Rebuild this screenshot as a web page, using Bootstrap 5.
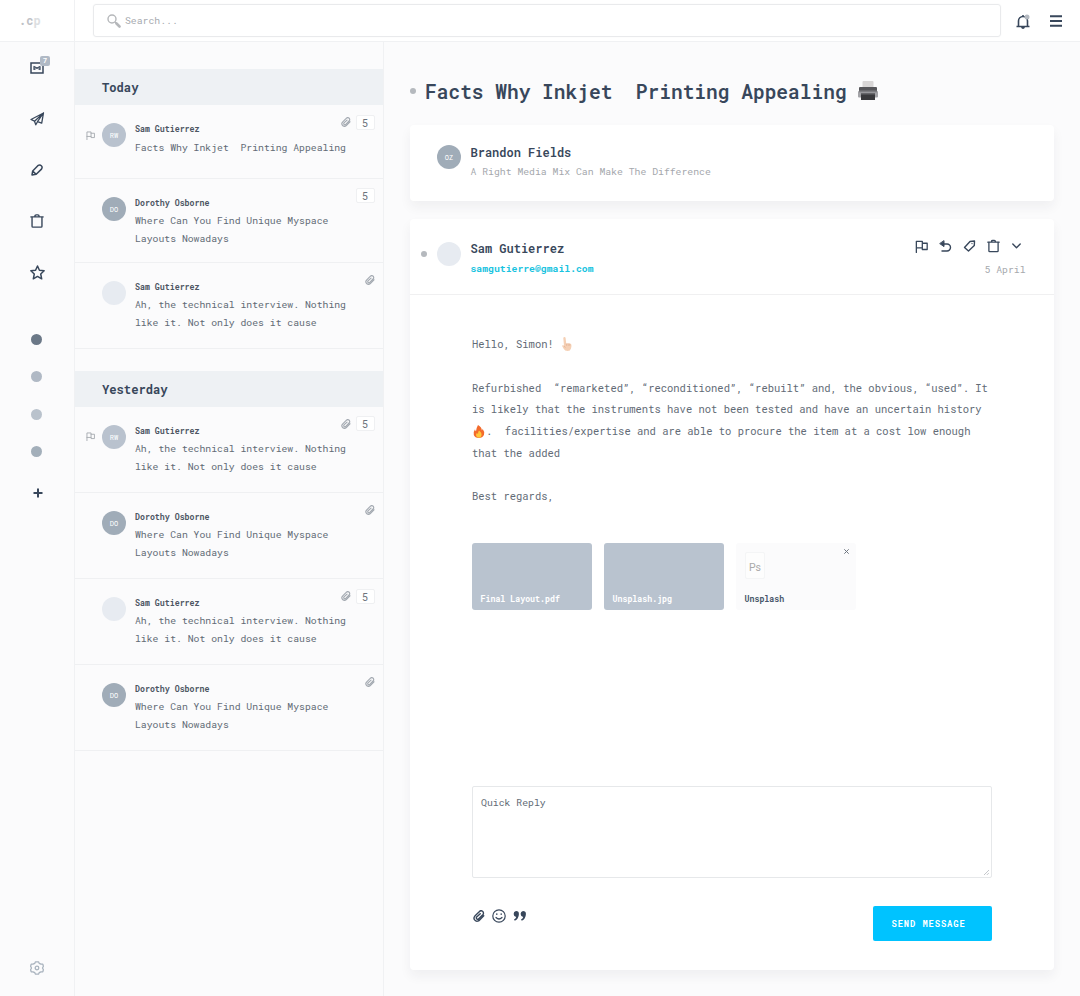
<!DOCTYPE html>
<html lang="en">
<head>
<meta charset="utf-8">
<meta name="viewport" content="width=device-width, initial-scale=1">
<title>Mail</title>
<link href="https://cdn.jsdelivr.net/npm/bootstrap@5.3.0/dist/css/bootstrap.min.css" rel="stylesheet">
<style>
:root{--ink:#38475b;--soft:#626b76;--line:#f0f1f3}
body{font-family:"Roboto Mono","DejaVu Sans Mono","Liberation Mono",monospace;font-size:9.77px;line-height:18px;color:var(--soft);background:#fbfbfc;height:996px;overflow:hidden}
svg{display:block;flex:none}
.ico{fill:none;stroke:currentColor;stroke-width:2.4;stroke-linejoin:round;stroke-linecap:round}
.topbar{height:42px;border-bottom:1px solid var(--line);background:#fff}
.logo{width:75px;border-right:1px solid var(--line);font-size:12px;font-weight:700;color:#bfc2c7;padding:0 0 2px 19px}
.logo span{color:#dcdee1}
.search{margin:4px 0 4px 18px;width:908px;border:1px solid #e9eaec;border-radius:3px;color:#a8abb0;padding-left:13px;box-shadow:0 0 2px rgba(0,0,0,.04)}
.search span{margin-left:4px}
.rail{width:75px;border-right:1px solid var(--line);color:var(--ink)}
.rail .slot{height:51px;padding-top:1px}
.tag7{position:absolute;left:10px;top:-6px;width:10px;height:10px;border-radius:2px;background:#b0b9c5;color:#fff;font-size:7px;font-weight:700;line-height:10px;text-align:center}
.dots{padding:36.500px 1px 0 0}
.dot{width:11px;height:11px;border-radius:50%;margin-bottom:26.5px}
.maillist{width:309px;border-right:1px solid var(--line);padding-top:27px}
.day{height:36px;background:#eef1f4;color:var(--ink);font-weight:700;font-size:12.15px;line-height:36px;padding-left:27px}
.item{height:86.2px;border-bottom:1px solid #eff0f2;padding:15px 8px 0 11px;position:relative}
.flagcol{width:16px;padding-top:10.500px;color:#a5a9af}
.av{width:24px;height:24px;border-radius:50%;color:#fff;font-size:7px;line-height:26px;text-align:center;flex:none;margin-top:3px}
.a1{background:#b9c2ce}.a2{background:#a0acb8}.a3{background:#e7ebf1}
.who{font-size:8.27px;font-weight:700;line-height:18px;color:#4d5663}
.txt{line-height:18px;white-space:pre}
.meta{position:absolute;right:8px;top:9px;color:#a3a9b1;height:16px}
.cnt{width:19px;height:15px;border:1px solid #eff0f2;border-radius:2px;background:#fff;color:#6d747d;text-align:center;line-height:14px;font-size:10.500px;padding-right:1px;margin-left:5px}
.content{padding:27px 26px 0}
.title{font-size:19.52px;line-height:46.500px;font-weight:600;color:var(--ink);white-space:pre;height:56px}
.bullet{width:6px;height:6px;border-radius:50%;background:#b5b9be;flex:none}
.panel{background:#fff;border-radius:4px;box-shadow:0 6px 12px rgba(30,40,60,.055)}
.nm{font-size:12px;font-weight:600;color:var(--ink);line-height:20px}
.letter{font-size:10.49px;line-height:21.75px;white-space:pre;padding:39px 0 0 62px;height:247.500px}
.letter svg{display:inline-block;vertical-align:-3px}
.file{width:120px;height:67px;border-radius:3px;background:#b9c3cf;color:#fff;font-size:8.28px;font-weight:700;padding:0 0 2px 8.5px;position:relative}
.file.plain{background:#fbfbfc;color:#47566a}
.ps{position:absolute;left:9px;top:9px;width:20px;height:27px;border:1px solid #f4f5f6;background:#fdfdfd;font-family:Roboto,sans-serif;font-weight:400;font-size:10.500px;line-height:30px;text-align:center;color:#aaa;border-radius:2px}
.reply{width:520px;height:92px;border:1px solid #e6e8ea;border-radius:2px;margin:177px 0 0 62px;padding:7px 8px;font-size:9.8px;position:relative}
.send{width:119px;height:35px;background:#00c3ff;color:#fff;font-weight:700;font-size:8.8px;letter-spacing:.9px;border-radius:2px;line-height:35px;padding:0 0 0 19px;border:0;text-align:left}
</style>
</head>
<body>
<svg width="0" height="0" class="position-absolute">
<symbol id="clip" viewBox="0 0 24 24"><path d="M21.500 11.500l-8.200 8.600a6 6 0 0 1-9.600-7.900L12.500 3.500a4.500 4.500 0 0 1 7.500 5.500l-8.500 8.500a2.500 2.500 0 0 1-4.300-3.500L14.500 7.500" stroke-width="2.800"/></symbol>
<symbol id="flag" viewBox="0 0 24 24"><path d="M2.500 23V2.500h11v12h-11M13.500 6h9v11.500h-9v-3"/></symbol>
<symbol id="trash" viewBox="0 0 24 24"><path d="M1.500 5h21M3.500 5v16q0 1.500 1.500 1.500h14q1.500 0 1.500-1.500V5M8.500 5V3.500q0-2 2-2h3q2 0 2 2V5"/></symbol>
</svg>

<header class="topbar d-flex align-items-stretch">
  <div class="logo d-flex align-items-center">.c<span>p</span></div>
  <div class="search d-flex align-items-center">
    <svg width="14" height="14" viewBox="0 0 14 14" fill="none" stroke="#b5b7ba"><circle cx="5" cy="5" r="4" stroke-width="1.400"/><path d="M8 8l2 2" stroke-width="1.500"/><path d="M9.500 9.500l3 3" stroke-width="2.600" stroke-linecap="round"/></svg>
    <span>Search...</span>
  </div>
  <div class="d-flex align-items-center" style="color:#38475b;padding-left:14.500px">
    <svg class="ico" style="margin-top:2px" width="14" height="16" viewBox="0 0 14 16"><path stroke-width="1.600" stroke-linecap="butt" d="M.5 12.500h13M2.500 12V7a4.500 4.500 0 0 1 9 0v5M7 2.500V1"/><path stroke="none" fill="currentColor" d="M5 13h4q-.5 2-2 2t-2-2z"/><circle cx="11" cy="3" r="2.500" fill="#b5bac1" stroke="none"/></svg>
    <svg width="12" height="12" viewBox="0 0 12 12" style="margin-left:20.500px;margin-top:1px" fill="currentColor"><path d="M0 .3h12v2H0zM0 5h12v2H0zM0 9.700h12v2H0z"/></svg>
  </div>
</header>

<div class="d-flex" style="height:954px">
  <nav class="rail d-flex flex-column align-items-center flex-shrink-0">
    <div class="slot d-flex align-items-center"><div class="position-relative">
      <svg class="ico" width="14" height="12" viewBox="0 0 14 12"><path stroke-width="1.500" stroke-linejoin="miter" d="M1 1h12v10H1z"/><path stroke-width="1.200" d="M4 4.500v3l3-1.500 3 1.500v-3L7 6z"/></svg><span class="tag7">7</span></div></div>
    <div class="slot d-flex align-items-center"><svg class="ico" width="15" height="14" viewBox="0 0 15 14"><path stroke-width="1.300" d="M13.500 1L1 7.500l3.500 1.700L13.500 1l-1.800 10.200-4.200-1.500L13.500 1M4.500 9.200l1.300 3.600 1.700-3.100"/></svg></div>
    <div class="slot d-flex align-items-center"><svg class="ico" width="12" height="12" viewBox="0 0 12 12"><path stroke-width="1.500" d="M1 11l.7-4L6.800 1.700q2-1.400 3.500 0t.2 3.400L5.200 10.300zM2.200 7.500l2.400 2.400"/></svg></div>
    <div class="slot d-flex align-items-center"><svg class="ico" width="14" height="14"><use href="#trash"/></svg></div>
    <div class="slot d-flex align-items-center"><svg class="ico" width="15" height="15" viewBox="0 0 14 14"><path stroke-width="1.400" d="M7 .9l1.800 4 4.400.5-3.200 3 .9 4.500L7 10.700l-3.900 2.200L4 8.400l-3.200-3 4.400-.5z"/></svg></div>
    <div class="dots d-flex flex-column align-items-center">
      <i class="dot" style="background:#6b7887"></i><i class="dot" style="background:#b0b9c5"></i><i class="dot" style="background:#b9c2cc"></i><i class="dot" style="background:#a3afba"></i>
      <svg width="10" height="10" viewBox="0 0 10 10" style="margin:4px 0 0 3px" stroke="currentColor" stroke-width="2"><path d="M5 .5v9M.5 5h9"/></svg>
    </div>
    <svg class="mt-auto" style="margin-bottom:21px" width="14" height="14" viewBox="0 0 14 14" fill="none" stroke="#a9b3be" stroke-width="1.300" stroke-linejoin="round"><path d="M5.500.8h3l.7 1.500 1.800.9 1.800-.1.600 2.200-.9 1.700.9 1.700-.6 2.200-1.800-.1-1.800.9-.7 1.500h-3l-.7-1.500-1.800-.9-1.800.1-.6-2.200L1.500 7 .6 5.300l.6-2.200 1.800.1 1.800-.9z"/><circle cx="7" cy="7" r="1.800"/></svg>
  </nav>

  <section class="maillist flex-shrink-0">
    <div class="day">Today</div>
    <div class="item d-flex" style="height:73.500px"><div class="flagcol"><svg class="ico" width="9" height="9"><use href="#flag"/></svg></div><div class="av a1">RW</div><div style="margin-left:9px"><div class="who">Sam Gutierrez</div><div class="txt" style="padding-top:.5px">Facts Why Inkjet  Printing Appealing</div></div><div class="meta d-flex align-items-center"><svg class="ico" width="10" height="10"><use href="#clip"/></svg><span class="cnt">5</span></div></div>
    <div class="item d-flex" style="height:84.500px"><div class="flagcol"></div><div class="av a2">DO</div><div style="margin-left:9px"><div class="who">Dorothy Osborne</div><div class="txt">Where Can You Find Unique Myspace
Layouts Nowadays</div></div><div class="meta d-flex align-items-center"><span class="cnt">5</span></div></div>
    <div class="item d-flex"><div class="flagcol"></div><div class="av a3"></div><div style="margin-left:9px"><div class="who">Sam Gutierrez</div><div class="txt">Ah, the technical interview. Nothing
like it. Not only does it cause</div></div><div class="meta d-flex align-items-center"><svg class="ico" width="10" height="10"><use href="#clip"/></svg></div></div>
    <div class="day" style="margin-top:21.500px">Yesterday</div>
    <div class="item d-flex"><div class="flagcol"><svg class="ico" width="9" height="9"><use href="#flag"/></svg></div><div class="av a1">RW</div><div style="margin-left:9px"><div class="who">Sam Gutierrez</div><div class="txt">Ah, the technical interview. Nothing
like it. Not only does it cause</div></div><div class="meta d-flex align-items-center"><svg class="ico" width="10" height="10"><use href="#clip"/></svg><span class="cnt">5</span></div></div>
    <div class="item d-flex"><div class="flagcol"></div><div class="av a2">DO</div><div style="margin-left:9px"><div class="who">Dorothy Osborne</div><div class="txt">Where Can You Find Unique Myspace
Layouts Nowadays</div></div><div class="meta d-flex align-items-center"><svg class="ico" width="10" height="10"><use href="#clip"/></svg></div></div>
    <div class="item d-flex"><div class="flagcol"></div><div class="av a3"></div><div style="margin-left:9px"><div class="who">Sam Gutierrez</div><div class="txt">Ah, the technical interview. Nothing
like it. Not only does it cause</div></div><div class="meta d-flex align-items-center"><svg class="ico" width="10" height="10"><use href="#clip"/></svg><span class="cnt">5</span></div></div>
    <div class="item d-flex"><div class="flagcol"></div><div class="av a2">DO</div><div style="margin-left:9px"><div class="who">Dorothy Osborne</div><div class="txt">Where Can You Find Unique Myspace
Layouts Nowadays</div></div><div class="meta d-flex align-items-center"><svg class="ico" width="10" height="10"><use href="#clip"/></svg></div></div>
  </section>

  <main class="content flex-grow-1">
    <div class="title d-flex"><i class="bullet" style="margin:19px 9px 0 0"></i><span>Facts Why Inkjet  Printing Appealing</span>
<svg width="20" height="20" viewBox="0 0 20 20" style="margin:12px 0 0 11px"><path d="M4.500 1q0-1 1-1h9q1 0 1 1v7h-11z" fill="#d8d6d6"/><rect x="1" y="6" width="18" height="5" rx="1" fill="#56565a"/><rect x="0" y="10" width="20" height="6.500" rx="1" fill="#a4a4a8"/><path d="M1 9.500h18v1.800H1z" fill="#7c7c80"/><path d="M3 12h14v7H3z" fill="#39393c"/><path d="M3 12h14v1.500H3z" fill="#66666a"/></svg></div>
    <div class="panel d-flex" style="height:76px;padding:17px 27px"><div class="av a2">OZ</div><div style="margin-left:9.500px"><div class="nm" style="line-height:21px">Brandon Fields</div><div style="color:#a5a8ad">A Right Media Mix Can Make The Difference</div></div></div>
    <div class="panel" style="height:751px;margin-top:18px">
      <div class="d-flex" style="height:76px;padding:20px 28.500px 0 11px;border-bottom:1px solid #f0f0f1">
        <i class="bullet" style="margin:12px 10px 0 0"></i><div class="av a3"></div>
        <div style="margin-left:9.500px"><div class="nm" style="line-height:19px">Sam Gutierrez</div><div style="color:#19c3e0;font-weight:700;line-height:21px">samgutierre@gmail.com</div></div>
        <div class="ms-auto" style="color:#38475b">
          <div class="d-flex align-items-center" style="height:14px;gap:11px">
            <svg class="ico" width="13" height="13"><use href="#flag"/></svg>
            <svg class="ico" width="13" height="12" viewBox="0 0 13 12"><path stroke-width="1.400" d="M3 11h5a3.500 3.500 0 0 0 0-7H4"/><path fill="currentColor" stroke-width="1" d="M5 1v5.600L1 3.800z"/></svg>
            <svg class="ico" width="13" height="12" viewBox="0 0 12 12"><path stroke-width="1.400" d="M1 7.500L6.500 1.500 11 1l-.2 4.500L5 11z"/><circle cx="8.500" cy="3.600" r=".7" fill="currentColor" stroke="none"/></svg>
            <svg class="ico" width="13" height="14"><use href="#trash"/></svg>
            <svg class="ico" style="margin:0 5px 0 1px" width="9" height="6" viewBox="0 0 9 6"><path stroke-width="1.400" d="M.8 1l3.700 3.700L8.200 1"/></svg>
          </div>
          <div class="text-end" style="color:#a5a8ad;line-height:33px">5 April</div>
        </div>
      </div>
      <div class="letter">Hello, Simon! <svg width="11" height="14" viewBox="0 0 11 14" style="margin-left:1px"><path d="M2.300 1q.2-1 1.200-1 1 0 1.100 1l.6 5.500q4-.5 5 .8.800 2-.2 4.200-.7 2.500-3.300 2.500-3 0-4.200-2.500L1 8.700q.700-1 2 0z" fill="#f5d0b5"/><path d="M5.200 6.500l.4 2.300M7 6.500l.3 2.300M8.700 6.700l.1 2.100M3 8.700l1.400 2" stroke="#dca98b" stroke-width=".6" fill="none"/></svg>

Refurbished  “remarketed”, “reconditioned”, “rebuilt” and, the obvious, “used”. It
is likely that the instruments have not been tested and have an uncertain history
<svg width="14" height="13" viewBox="0 0 14 13"><path d="M6 0q4 2.500 3.800 5.300.8-.5.800-1.500Q13 7 12 9.800 10.500 13 6.800 13 3 13 1.800 10 1 7 3 4.200q.2 1.600 1 2Q4.500 2.500 6 0z" fill="#f36b2c"/><path d="M7 5.500q3 2.200 2.500 5Q9 12.800 6.800 12.800 4.300 12.700 4 10.300q0-1.500 1-2.600.3 1 1 1.200Q6 7 7 5.500z" fill="#ffc83a"/></svg>.  facilities/expertise and are able to procure the item at a cost low enough
that the added

Best regards,</div>
      <div class="d-flex" style="gap:12px;margin-left:62px">
        <div class="file d-flex align-items-end">Final Layout.pdf</div>
        <div class="file d-flex align-items-end">Unsplash.jpg</div>
        <div class="file plain d-flex align-items-end"><span class="ps">Ps</span>Unsplash<svg class="position-absolute" style="right:7px;top:6px" width="5" height="5" viewBox="0 0 5 5" stroke="#6c747e" stroke-width="1"><path d="M.3.3l4.400 4.400M4.700.3L.3 4.700"/></svg></div>
      </div>
      <div class="reply" style="margin-top:176.500px">Quick Reply<svg class="position-absolute" style="right:2px;bottom:2px" width="5" height="5" viewBox="0 0 5 5" stroke="#c5c8cc" fill="none"><path d="M0 5l5-5M2.800 5L5 2.800"/></svg></div>
      <div class="d-flex" style="margin:28px 62.500px 0 63px">
        <div class="d-flex align-items-center" style="height:20px;color:#38475b;gap:7px">
          <svg class="ico" width="12" height="12"><use href="#clip"/></svg>
          <svg class="ico" width="14" height="14" viewBox="0 0 14 14"><circle cx="7" cy="7" r="6.200" stroke-width="1.200"/><path stroke-width="1.200" d="M4 8.500q3 3 6 0"/><path stroke-width="1.500" d="M4.800 5v.3M9.200 5v.3"/></svg>
          <svg width="13" height="10" viewBox="0 0 13 10" fill="currentColor"><path id="q" d="M3 0a3 3 0 0 1 2.900 3.200Q5.700 8 1.800 9.700L1 8.600q1.800-1 2.200-2.700A3 3 0 0 1 3 0z"/><use href="#q" x="7"/></svg>
        </div>
        <button class="send ms-auto">SEND MESSAGE</button>
      </div>
    </div>
  </main>
</div>
<script src="https://cdn.jsdelivr.net/npm/bootstrap@5.3.0/dist/js/bootstrap.bundle.min.js"></script>
</body>
</html>
